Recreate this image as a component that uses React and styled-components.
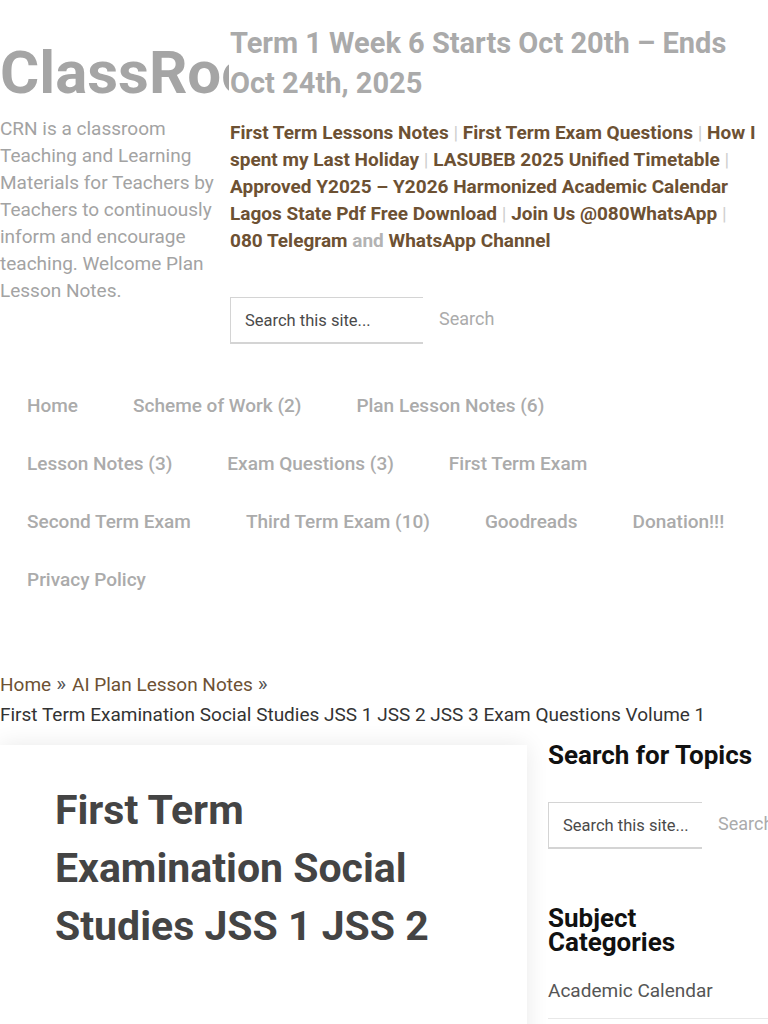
import React from "react";
import styled, { createGlobalStyle } from "styled-components";

const GlobalStyle = createGlobalStyle`
  html, body {
    margin: 0;
    padding: 0;
    background: #fff;
    overflow-x: hidden;
  }
  body {
    font-family: Roboto, "Liberation Sans", Arial, sans-serif;
    width: 768px;
  }
  * { box-sizing: border-box; }
  a { text-decoration: none; }
`;

const topLinks = [
  "First Term Lessons Notes",
  "First Term Exam Questions",
  "How I spent my Last Holiday",
  "LASUBEB 2025 Unified Timetable",
  "Approved Y2025 – Y2026 Harmonized Academic Calendar Lagos State Pdf Free Download",
  "Join Us @080WhatsApp",
];

const menu = [
  "Home",
  "Scheme of Work (2)",
  "Plan Lesson Notes (6)",
  "Lesson Notes (3)",
  "Exam Questions (3)",
  "First Term Exam",
  "Second Term Exam",
  "Third Term Exam (10)",
  "Goodreads",
  "Donation!!!",
  "Privacy Policy",
];

const Page = styled.div`
  width: 768px;
  overflow: hidden;
`;

const Header = styled.header`
  display: grid;
  grid-template-columns: 229px 1fr;
  align-items: start;
`;

const Brand = styled.div`
  padding-top: 37px;
  overflow: hidden;
`;

const SiteTitle = styled.h1`
  margin: 0 0 6px;
  font-size: 60px;
  line-height: 72px;
  font-weight: 700;
  color: #a5a5a5;
  white-space: nowrap;
`;

const Tagline = styled.p`
  margin: 0;
  font-size: 19px;
  line-height: 27px;
  color: #a3a3a3;
`;

const Notice = styled.div`
  padding: 23px 8px 0 1px;
`;

const NoticeTitle = styled.h2`
  margin: 0 0 16px;
  font-size: 29px;
  line-height: 40px;
  font-weight: 700;
  color: #aaaaaa;
`;

const NoticeLinks = styled.p`
  margin: 0;
  font-size: 19px;
  line-height: 27px;
  font-weight: 700;
  color: #b0b0b0;
`;

const Brown = styled.a`
  color: #6d5133;
`;

const Sep = styled.span`
  color: #cfcfcf;
  font-weight: 400;
`;

const Plain = styled.span`
  color: #b3b3b3;
`;

const SearchForm = styled.form`
  display: flex;
  align-items: center;
  margin-top: ${(p) => p.$top || 0}px;
`;

const SearchInput = styled.div`
  width: ${(p) => p.$w}px;
  flex-shrink: 0;
  height: 47px;
  display: flex;
  align-items: center;
  padding-left: 14px;
  border: 1px solid #d4d4d4;
  border-right: none;
  border-bottom: 2px solid #d4d4d4;
  font-size: 16.5px;
  color: #4a4a4a;
  white-space: nowrap;
`;

const SearchButton = styled.span`
  padding-left: 16px;
  font-size: 18px;
  color: #ababab;
  white-space: nowrap;
  margin-top: -4px;
`;

const Nav = styled.nav`
  display: flex;
  flex-wrap: wrap;
  margin-top: 33px;
`;

const NavItem = styled.a`
  display: block;
  padding: 18px 28px 18px 27px;
  font-size: 19px;
  line-height: 22px;
  font-weight: 500;
  color: #ababab;
  white-space: nowrap;
`;

const Crumbs = styled.div`
  margin-top: 60px;
  font-size: 19px;
  line-height: 30px;
  color: #333;
`;

const CrumbLink = styled.a`
  color: #6d5133;
`;

const Raquo = styled.span`
  color: #555;
  font-size: 21px;
  margin: 0 6px 0 5px;
`;

const Main = styled.div`
  display: grid;
  grid-template-columns: 527px 240px;
  column-gap: 21px;
  margin-top: 15px;
  align-items: start;
`;

const Card = styled.article`
  background: #fff;
  min-height: 320px;
  padding: 36px 78px 40px 55px;
  box-shadow: 0 0 22px rgba(0, 0, 0, 0.09);
`;

const PostTitle = styled.h1`
  margin: 0;
  font-size: 41px;
  line-height: 58px;
  font-weight: 700;
  color: #444;
`;

const Sidebar = styled.aside`
  margin-top: -5px;
`;

const WidgetTitle = styled.h3`
  margin: 0;
  font-size: 26px;
  line-height: ${(p) => p.$lh || 24}px;
  font-weight: 700;
  color: #111;
`;

const Spacer = styled.div`
  height: ${(p) => p.$h}px;
`;

const CatList = styled.ul`
  list-style: none;
  margin: 23px 0 0;
  padding: 0;
`;

const CatItem = styled.li`
  font-size: 19px;
  line-height: 27px;
  color: #555;
  padding-bottom: 14px;
  margin-bottom: 14px;
  border-bottom: 1px solid #e8e8e8;
`;

export default function App() {
  return (
    <Page>
      <GlobalStyle />
      <Header>
        <Brand>
          <SiteTitle>ClassRoom Notes</SiteTitle>
          <Tagline>
            CRN is a classroom Teaching and Learning Materials for Teachers by
            Teachers to continuously inform and encourage teaching. Welcome Plan
            Lesson Notes.
          </Tagline>
        </Brand>
        <Notice>
          <NoticeTitle>Term 1 Week 6 Starts Oct 20th – Ends Oct 24th, 2025</NoticeTitle>
          <NoticeLinks>
            {topLinks.map((t) => (
              <React.Fragment key={t}>
                <Brown>{t}</Brown> <Sep>|</Sep>{" "}
              </React.Fragment>
            ))}
            <Brown>080 Telegram</Brown> <Plain>and</Plain> <Brown>WhatsApp Channel</Brown>
          </NoticeLinks>
          <SearchForm $top={43}>
            <SearchInput $w={193}>Search this site...</SearchInput>
            <SearchButton>Search</SearchButton>
          </SearchForm>
        </Notice>
      </Header>

      <Nav>
        {menu.map((m) => (
          <NavItem key={m}>{m}</NavItem>
        ))}
      </Nav>

      <Crumbs>
        <CrumbLink>Home</CrumbLink>
        <Raquo>»</Raquo>
        <CrumbLink>AI Plan Lesson Notes</CrumbLink>
        <Raquo>»</Raquo>
        <br />
        First Term Examination Social Studies JSS 1 JSS 2 JSS 3 Exam Questions Volume 1
      </Crumbs>

      <Main>
        <Card>
          <PostTitle>First Term Examination Social Studies JSS 1 JSS 2</PostTitle>
        </Card>
        <Sidebar>
          <WidgetTitle $lh={30}>Search for Topics</WidgetTitle>
          <SearchForm $top={32}>
            <SearchInput $w={154}>Search this site...</SearchInput>
            <SearchButton>Search</SearchButton>
          </SearchForm>
          <Spacer $h={57} />
          <WidgetTitle>
            Subject
            <br />
            Categories
          </WidgetTitle>
          <CatList>
            <CatItem>Academic Calendar</CatItem>
            <CatItem>Agricultural Science</CatItem>
          </CatList>
        </Sidebar>
      </Main>
    </Page>
  );
}
